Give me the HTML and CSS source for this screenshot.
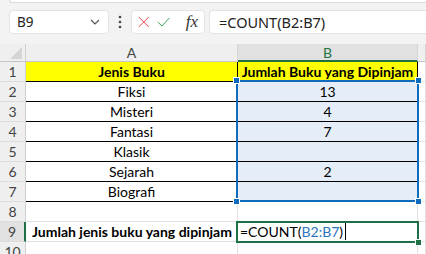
FILE: index.html
```html
<!DOCTYPE html>
<html lang="en">
<head>
    <meta charset="UTF-8">
    <title>COUNT - Jumlah Buku</title>
    <link rel="stylesheet" href="styles.css">
</head>
<body>
    <div class="ribbon-edge"></div>

    <div class="formula-bar">
        <div class="name-box">
            <span>B9</span>
            <svg width="10" height="6" viewBox="0 0 10 6"><path d="M1 1 L5 5 L9 1" fill="none" stroke="#555" stroke-width="1.2"/></svg>
        </div>
        <div class="dots">
            <svg width="4" height="14" viewBox="0 0 4 14"><circle cx="2" cy="2" r="1.3" fill="#444"/><circle cx="2" cy="7" r="1.3" fill="#444"/><circle cx="2" cy="12" r="1.3" fill="#444"/></svg>
        </div>
        <div class="fx-box">
            <svg width="14" height="14" viewBox="0 0 14 14"><path d="M1 1 L13 13 M13 1 L1 13" stroke="#e0474c" stroke-width="1.2"/></svg>
            <svg width="16" height="12" viewBox="0 0 16 12"><path d="M1 6 L6 11 L15 1" fill="none" stroke="#3aa35b" stroke-width="1.2"/></svg>
            <span class="fx">fx</span>
        </div>
        <div class="formula-input">=COUNT(B2:B7)</div>
    </div>

    <div class="sheet">
        <div class="corner"><svg width="12" height="12" viewBox="0 0 12 12"><path d="M12 0 L12 12 L0 12 Z" fill="#d4d4d4"/></svg></div>
        <div class="col-head">A</div>
        <div class="col-head active">B</div>
        <div class="col-head"></div>

        <div class="row-head">1</div>
        <div class="cell tbl head">Jenis Buku</div>
        <div class="cell tbl head">Jumlah Buku yang Dipinjam</div>
        <div class="cell"></div>

        <div class="row-head">2</div>
        <div class="cell tbl">Fiksi</div>
        <div class="cell tbl sel">13</div>
        <div class="cell"></div>

        <div class="row-head">3</div>
        <div class="cell tbl">Misteri</div>
        <div class="cell tbl sel">4</div>
        <div class="cell"></div>

        <div class="row-head">4</div>
        <div class="cell tbl">Fantasi</div>
        <div class="cell tbl sel">7</div>
        <div class="cell"></div>

        <div class="row-head">5</div>
        <div class="cell tbl">Klasik</div>
        <div class="cell tbl sel"></div>
        <div class="cell"></div>

        <div class="row-head">6</div>
        <div class="cell tbl">Sejarah</div>
        <div class="cell tbl sel">2</div>
        <div class="cell"></div>

        <div class="row-head">7</div>
        <div class="cell tbl">Biografi</div>
        <div class="cell tbl sel"></div>
        <div class="cell"></div>

        <div class="row-head">8</div>
        <div class="cell"></div>
        <div class="cell"></div>
        <div class="cell"></div>

        <div class="row-head active">9</div>
        <div class="cell label">Jumlah jenis buku yang dipinjam</div>
        <div class="cell edit">=COUNT(<span class="ref">B2:B7</span>)<span class="caret"></span></div>
        <div class="cell"></div>

        <div class="row-head">10</div>
        <div class="cell"></div>
        <div class="cell"></div>
        <div class="cell"></div>

        <!-- selection range B2:B7 -->
        <div class="range">
            <i class="handle tl"></i><i class="handle tr"></i>
            <i class="handle bl"></i><i class="handle br"></i>
        </div>
        <!-- active cell B9 -->
        <div class="active-cell"><i class="fill"></i></div>
    </div>
</body>
</html>
```

FILE: styles.css
```css
body {
    margin: 0;
    width: 426px;
    height: 254px;
    overflow: hidden;
    background-color: #f3f3f3;
    font-family: Lato, "Noto Sans", sans-serif;
}

.ribbon-edge {
    height: 2px;
    margin-left: 9px;
    background: white;
    border: 1px solid #dadada;
    border-top: none;
    border-right: none;
    border-bottom-left-radius: 5px;
}

.formula-bar {
    display: flex;
    align-items: center;
    height: 24px;
    padding: 7px 0 10px 9px;
    font-family: "Noto Sans", sans-serif;
    color: #222;
}

.name-box {
    display: flex;
    align-items: center;
    justify-content: space-between;
    box-sizing: border-box;
    width: 100px;
    height: 24px;
    padding: 0 8px 0 7px;
    background: white;
    border: 1px solid #e3e3e3;
    border-radius: 4px;
    font-size: 13.5px;
}

.dots {
    display: flex;
    justify-content: center;
    width: 22px;
}

.fx-box {
    display: flex;
    align-items: center;
    box-sizing: border-box;
    width: 74px;
    height: 24px;
    padding: 0 6px 0 6px;
    gap: 7px;
    background: white;
    border: 1px solid #e3e3e3;
    border-radius: 4px;
}

.fx {
    margin-left: 9px;
    font-family: "Liberation Serif", serif;
    font-style: italic;
    font-size: 17px;
    color: #333;
}

.formula-input {
    flex: 1;
    box-sizing: border-box;
    height: 24px;
    margin-left: 4px;
    padding: 1px 0 0 9px;
    background: white;
    border: 1px solid #e3e3e3;
    border-right: none;
    border-radius: 4px 0 0 4px;
    font-size: 14.5px;
    line-height: 21px;
}

.sheet {
    position: relative;
    display: grid;
    grid-template-columns: 26px 212px 180px 1fr;
    grid-template-rows: 18px repeat(10, 20px);
    background: white;
    font-size: 14px;
    color: #000;
}

.corner {
    display: flex;
    align-items: flex-end;
    justify-content: flex-end;
    padding: 0 3px 2px 0;
    background: #efefef;
    border-right: 1px solid #cfcfcf;
    border-bottom: 1px solid #c6c6c6;
}

.col-head {
    display: flex;
    align-items: center;
    justify-content: center;
    box-sizing: border-box;
    background: #efefef;
    border-right: 1px solid #d4d4d4;
    border-bottom: 1px solid #c6c6c6;
    color: #444;
    font-size: 14px;
}

.col-head.active {
    background: #e1e1e1;
    color: #1e7145;
    border-bottom: 2px solid #1e7145;
}

.row-head {
    display: flex;
    align-items: center;
    justify-content: center;
    box-sizing: border-box;
    background: #efefef;
    border-right: 1px solid #cfcfcf;
    border-bottom: 1px solid #dcdcdc;
    color: #444;
    font-size: 14px;
}

.row-head.active {
    background: #e1e1e1;
    border-right: 2px solid #1e7145;
}

.cell {
    display: flex;
    align-items: center;
    justify-content: center;
    box-sizing: border-box;
    border-right: 1px solid #e1e1e1;
    border-bottom: 1px solid #e1e1e1;
    white-space: nowrap;
    overflow: visible;
}

.cell.tbl {
    border-right-color: #000;
    border-bottom-color: #000;
}

.cell.head {
    background: #ffff00;
    font-weight: bold;
}

.cell.sel {
    background: #e5eef8;
}

.cell.label {
    justify-content: flex-start;
    padding-left: 6px;
    font-weight: bold;
    border-right: none;
}

.cell.edit {
    justify-content: flex-start;
    padding-left: 2px;
}

.ref {
    color: #2e75c2;
}

.caret {
    width: 0;
    height: 17px;
    margin-left: 2px;
    border-left: 1px solid #000;
}

.range {
    position: absolute;
    left: 236px;
    top: 36px;
    width: 179px;
    height: 118px;
    border: 2px solid #0f6cbd;
    pointer-events: none;
}

.handle {
    position: absolute;
    width: 5px;
    height: 5px;
    background: #0f6cbd;
    border: 1px solid white;
}

.handle.tl { left: -5px; top: -5px; }
.handle.tr { right: -5px; top: -5px; }
.handle.bl { left: -5px; bottom: -5px; }
.handle.br { right: -5px; bottom: -5px; }

.active-cell {
    position: absolute;
    left: 236px;
    top: 177px;
    width: 179px;
    height: 18px;
    border: 2px solid #1e7145;
}

.active-cell .fill {
    position: absolute;
    right: -5px;
    bottom: -5px;
    width: 5px;
    height: 5px;
    background: #1e7145;
    border: 1px solid white;
}
```
